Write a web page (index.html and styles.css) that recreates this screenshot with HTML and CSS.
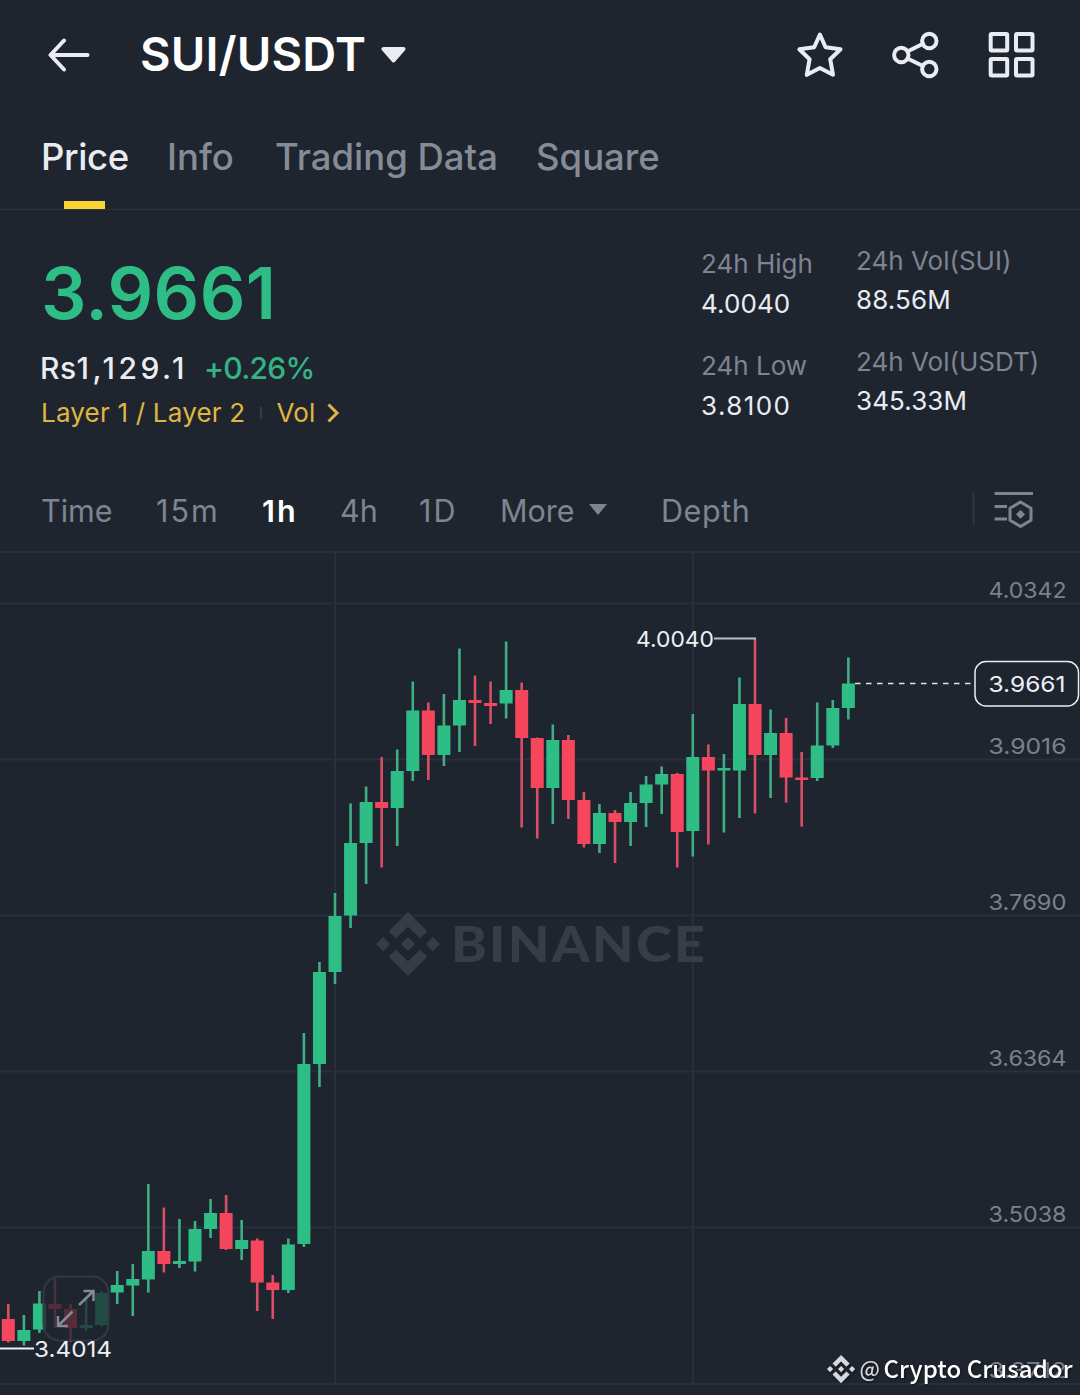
FILE: index.html
```html
<!DOCTYPE html>
<html lang="en">
<head>
<meta charset="utf-8">
<title>SUI/USDT</title>
<link rel="stylesheet" href="styles.css">
</head>
<body>
<header class="header">
  <svg class="back" width="42" height="34" viewBox="0 0 42 34"><path d="M16 2.5 2.5 17 16 31.500M2.500 17H39.500"/></svg>
  <h1 class="pair">SUI/USDT</h1>
  <svg class="caret" width="25" height="16" viewBox="0 0 25 16"><path d="M2.500 2H22.500L12.500 13.500Z"/></svg>
  <div class="actions">
    <svg width="48" height="48" viewBox="0 0 48 48"><path d="M23.900 3.500 29.600 16.200 44.500 18.300 34.200 28.200 37 43.800 23.900 37 10.800 43.800 13.600 28.200 3.300 18.300 18.200 16.200Z"/></svg>
    <svg width="48" height="48" viewBox="0 0 48 48"><circle cx="9.300" cy="24" r="7.200"/><circle cx="37.300" cy="10" r="7.200"/><circle cx="37.300" cy="38" r="7.200"/><path d="M15.500 20.500 31 12.700M15.500 27.500 31 35"/></svg>
    <svg width="48" height="48" viewBox="0 0 48 48"><rect x="2.700" y="3" width="16.500" height="16.500" rx="1"/><rect x="28" y="3" width="16.500" height="16.500" rx="1"/><rect x="2.700" y="28" width="16.500" height="16.500" rx="1"/><rect x="28" y="28" width="16.500" height="16.500" rx="1"/></svg>
  </div>
</header>

<nav class="tabs">
  <a class="tab active">Price</a>
  <a class="tab">Info</a>
  <a class="tab">Trading Data</a>
  <a class="tab">Square</a>
</nav>

<section class="summary">
  <div class="quote">
    <div class="last">3.9661</div>
    <div class="fiat"><span class="rs">Rs<span class="amount">1,129.1</span></span><span class="change">+0.26%</span></div>
    <div class="tags"><span>Layer 1 / Layer 2</span><i class="sep"></i><span>Vol</span>
      <svg width="14" height="22" viewBox="0 0 14 22"><path d="M2.500 2.500 11 11 2.500 19.500"/></svg>
    </div>
  </div>
  <dl class="stats range">
    <dt>24h High</dt><dd>4.0040</dd>
    <dt>24h Low</dt><dd class="loose">3.8100</dd>
  </dl>
  <dl class="stats volume">
    <dt>24h Vol(SUI)</dt><dd>88.56M</dd>
    <dt>24h Vol(USDT)</dt><dd>345.33M</dd>
  </dl>
</section>

<nav class="intervals">
  <a>Time</a>
  <a class="loose">15m</a>
  <a class="loose selected">1h</a>
  <a>4h</a>
  <a class="loose">1D</a>
  <a class="more">More <svg width="20" height="13" viewBox="0 0 20 13"><path d="M1 1H19L10 12Z"/></svg></a>
  <a class="depth">Depth</a>
  <svg class="settings" width="62" height="40" viewBox="0 0 62 40">
    <path class="rule" d="M1.500 3.500V36.500"/>
    <path d="M22.500 4.500H61M22.500 17.500H35M22.500 30H35M48.500 13 59 19.300V31.300L48.500 37.500 38 31.300V19.300Z"/>
    <path class="dot" d="M48.500 21.300 52.500 25.300 48.500 29.300 44.500 25.300Z"/>
  </svg>
</nav>

<main class="chart">
  <svg class="plot" width="1080" height="844" viewBox="0 551 1080 844">
    <defs>
      <g id="mark">
        <path d="M32 0 51.500 19.500 44 26.500 32 14.500 20 26.500 12.500 19.500ZM32 64 51.500 44.500 44 37.500 32 49.500 20 37.500 12.500 44.500ZM32 25 39 32 32 39 25 32ZM7 25 14 32 7 39 0 32ZM57 25 64 32 57 39 50 32Z"/>
      </g>
    </defs>
    <path class="grid" d="M0 552H1080M0 603.500H1080M0 759.500H1080M0 915.500H1080M0 1071.500H1080M0 1227.500H1080M0 1384H1080M335 552V1384M693 552V1384"/>
    <g class="brand">
      <use href="#mark" transform="translate(376 912)"/>
      <text x="451" y="962" textLength="256" lengthAdjust="spacingAndGlyphs">BINANCE</text>
    </g>
    <g id="candles"></g>
    <g class="axis">
      <text x="988.500" y="598" textLength="78" lengthAdjust="spacingAndGlyphs">4.0342</text>
      <text x="988.500" y="754" textLength="78" lengthAdjust="spacingAndGlyphs">3.9016</text>
      <text x="988.500" y="910" textLength="78" lengthAdjust="spacingAndGlyphs">3.7690</text>
      <text x="988.500" y="1066" textLength="78" lengthAdjust="spacingAndGlyphs">3.6364</text>
      <text x="988.500" y="1222" textLength="78" lengthAdjust="spacingAndGlyphs">3.5038</text>
      <text x="988.500" y="1378" textLength="78" lengthAdjust="spacingAndGlyphs">3.3712</text>
    </g>
    <path class="leader high" d="M714 638.500H756"/>
    <text class="label" x="636" y="647" textLength="78" lengthAdjust="spacingAndGlyphs">4.0040</text>
    <path class="dash" d="M855 683.500H972"/>
    <rect class="tag" x="975" y="661.500" width="103.500" height="44.500" rx="11"/>
    <text class="label" x="988.500" y="692" textLength="77" lengthAdjust="spacingAndGlyphs">3.9661</text>
    <rect class="expand" x="43.500" y="1276.500" width="65" height="64" rx="16"/>
    <path class="arrows" d="M79 1305 93.500 1291M83.500 1291H93.500V1301M72.500 1311.500 58 1326M58 1316V1326H68"/>
    <path class="leader" d="M0 1348.500H34"/>
    <text class="label" x="34" y="1357" textLength="78" lengthAdjust="spacingAndGlyphs">3.4014</text>
    <g class="credit">
      <use class="soft" href="#mark" transform="translate(827 1355) scale(.44)"/>
      <text class="soft at" x="859.500" y="1377" textLength="21">@</text>
      <text x="883.500" y="1378" textLength="189">Crypto Crusador</text>
    </g>
  </svg>
</main>
<script src="chart.js"></script>
</body>
</html>
```
FILE: styles.css
```css
* { box-sizing: border-box; }

body {
  margin: 0;
  width: 1080px;
  height: 1395px;
  overflow: hidden;
  background: #1f252f;
  color: #eaecf2;
  font-family: Inter, "Noto Sans", sans-serif;
}

.header {
  display: flex;
  align-items: center;
  height: 108px;
  padding: 1px 44px 0 48px;
}
.header svg { fill: none; stroke: #eaecf4; stroke-width: 4; stroke-linecap: round; stroke-linejoin: round; }
.pair {
  margin: 0 0 0 50px;
  padding-bottom: 2px;
  font-size: 47px;
  font-weight: 600;
  line-height: 60px;
  letter-spacing: 0.2px;
  color: #fff;
}
.header .caret { margin: 1px 0 0 15px; fill: #eaecf4; }
.actions { display: flex; gap: 48px; margin-left: auto; }

.tabs {
  display: grid;
  grid-template-columns: 126px 108px 261px auto;
  height: 102px;
  padding: 29px 0 0 41px;
  border-bottom: 1px solid #2d343f;
  font-size: 36.500px;
  font-weight: 500;
  line-height: 40px;
  color: #858b97;
}
.tab { position: relative; }
.tab.active { letter-spacing: -0.4px; color: #eaecf2; }
.tab.active::after {
  content: "";
  position: absolute;
  left: 23px;
  bottom: 0;
  width: 41px;
  height: 8px;
  background: #fbd535;
}

.summary {
  display: grid;
  grid-template-columns: 660px 155px auto;
  height: 260px;
  padding-left: 41px;
}
.quote { padding-top: 43px; line-height: 40px; }
.last {
  font-size: 71.500px;
  font-weight: 600;
  line-height: 80px;
  letter-spacing: 0.3px;
  color: #2ebd85;
}
.fiat {
  display: flex;
  height: 40px;
  margin: 15px 0 5px -1px;
  font-size: 30px;
  font-weight: 500;
}
.rs { width: 164px; letter-spacing: 0.500px; }
.amount { letter-spacing: 3.500px; }
.change { letter-spacing: -0.7px; color: #35b382; }
.tags { display: flex; align-items: center; font-size: 26px; letter-spacing: 0.2px; color: #e0b643; }
.sep { width: 2px; height: 12px; margin: 0 14px 0 15px; background: #363d48; }
.tags svg { margin-left: 10px; fill: none; stroke: #e0b643; stroke-width: 3; }

.stats { margin: 0; padding-top: 34px; font-size: 26px; line-height: 40px; }
.stats.volume { padding-top: 31px; }
.stats dt { color: #7d8490; }
.stats dd { margin: 0 0 22px; letter-spacing: 0.100px; }
.stats.volume dd { margin-top: -1px; }
.stats .loose { letter-spacing: 1.400px; }

.intervals {
  display: grid;
  grid-template-columns: 115px 106px 78px 79px 81px 161px 310.500px auto;
  align-items: center;
  height: 81px;
  padding-left: 41px;
  font-size: 30.5px;
  line-height: 40px;
  color: #7e8591;
}
.intervals .loose { letter-spacing: 2px; }
.depth { letter-spacing: 0.600px; }
.selected { font-weight: 600; color: #fff; }
.more { display: flex; align-items: center; gap: 13px; }
.more svg { fill: #7e8591; margin-bottom: 2px; }
.settings { margin-bottom: 3px; fill: none; stroke: #7e8591; stroke-width: 3; stroke-linejoin: round; }
.settings .rule { stroke: #2f3641; stroke-width: 2; }
.settings .dot { fill: #7e8591; stroke-width: 1; }

.plot { display: block; }
.grid { fill: none; stroke: #2a303b; stroke-width: 2; }
.brand { fill: #363d47; font: 900 50px Lato, sans-serif; letter-spacing: 2px; }
.axis, .label { font-size: 22px; }
.axis { fill: #7a818d; }
.label { fill: #eef0f5; }
.leader { stroke: #eef0f5; stroke-width: 2; }
.leader.high { stroke: #b9bdc5; }
.dash { stroke: #dfe2e8; stroke-width: 1.500; stroke-dasharray: 5.500 5.500; }
.tag { fill: #1f252f; stroke: #eaecf2; stroke-width: 1.500; }
.up { fill: #2ebd85; }
.down { fill: #f6465d; }
.up .wick { fill: #3fae85; }
.down .wick { fill: #d94f66; }
.expand { fill: #1f252f; fill-opacity: .75; stroke: #333944; stroke-width: 2; }
.arrows { fill: none; stroke: #848a96; stroke-width: 2.500; }
.credit { fill: #fff; font: 500 24px "Noto Sans CJK SC", sans-serif; filter: drop-shadow(1px 1px 1px rgba(0, 0, 0, .5)); }
.credit .soft { fill: #d5d8dd; }
.credit .at { font-size: 21px; }
```
FILE: chart.js
```js
// Each candle: direction, wick top, body top, body bottom, wick bottom.
const candles = [
  ["d", 1304, 1319, 1341, 1342.5], ["u", 1315, 1330, 1341, 1345.5], ["u", 1291, 1303.5, 1329.5, 1333],
  ["d", 1279, 1304, 1309, 1328], ["d", 1304, 1309, 1328, 1342], ["u", 1298, 1325, 1328, 1331],
  ["u", 1291, 1293, 1325, 1326.5], ["u", 1271, 1285, 1292.5, 1304], ["u", 1264, 1279, 1285.5, 1316],
  ["u", 1184, 1251, 1279.5, 1292.5], ["d", 1207.5, 1251, 1264, 1272.5], ["u", 1219, 1261, 1264, 1268],
  ["u", 1221, 1229, 1261.5, 1271.5], ["u", 1199, 1213, 1229, 1238], ["d", 1195, 1213, 1249, 1250],
  ["u", 1220, 1240, 1249, 1260], ["d", 1238.5, 1240.5, 1282.5, 1311], ["d", 1275, 1282.5, 1290, 1319],
  ["u", 1238.5, 1244.5, 1290, 1293], ["u", 1033, 1064, 1244, 1247], ["u", 962, 972, 1064, 1087],
  ["u", 893, 916, 972, 984], ["u", 803.5, 843, 915.5, 928], ["u", 786.5, 802, 843, 884],
  ["d", 757, 802, 808, 867.5], ["u", 749.5, 771, 808, 846], ["u", 681.5, 710.5, 771, 781],
  ["d", 702.5, 710.5, 755, 780], ["u", 694, 725.5, 755, 766], ["u", 648.5, 700, 725.5, 752],
  ["d", 675.5, 700, 703, 746], ["d", 681.5, 703, 706, 724], ["u", 641.5, 690, 703.5, 718.5],
  ["d", 682.5, 690, 738, 827.5], ["d", 737.5, 738, 788, 838.5], ["u", 724.5, 740, 788, 824],
  ["d", 735, 740, 800, 819], ["d", 792, 800, 844, 847.5], ["u", 804, 813, 844, 853],
  ["d", 810, 813, 822, 863], ["u", 792, 803, 822, 846], ["u", 776, 784.5, 803, 827],
  ["u", 766.5, 774, 784.5, 814], ["d", 773, 774, 832, 867.5], ["u", 714, 757, 831, 856.5],
  ["d", 744.5, 757, 770.5, 844.5], ["u", 754, 768, 770.5, 832.5], ["u", 677.5, 704, 770.5, 818],
  ["d", 639, 704, 755, 813.5], ["u", 709.5, 733, 755, 798], ["d", 718, 733, 777.5, 802.5],
  ["d", 752, 777.5, 780, 826.5], ["u", 702.5, 745.5, 778, 781], ["u", 700, 708, 745.5, 748],
  ["u", 657.5, 683.5, 708, 719.5]
];
const FIRST = 8.33, STEP = 15.556, BODY = 13, WICK = 2.6;

document.getElementById("candles").innerHTML = candles.map(([dir, high, top, bottom, low], i) => {
  const x = FIRST + STEP * i;
  return `<g class="${dir === "u" ? "up" : "down"}">` +
    `<rect class="wick" x="${x - WICK / 2}" y="${high}" width="${WICK}" height="${low - high}"/>` +
    `<rect x="${x - BODY / 2}" y="${top}" width="${BODY}" height="${bottom - top}"/></g>`;
}).join("");
```
